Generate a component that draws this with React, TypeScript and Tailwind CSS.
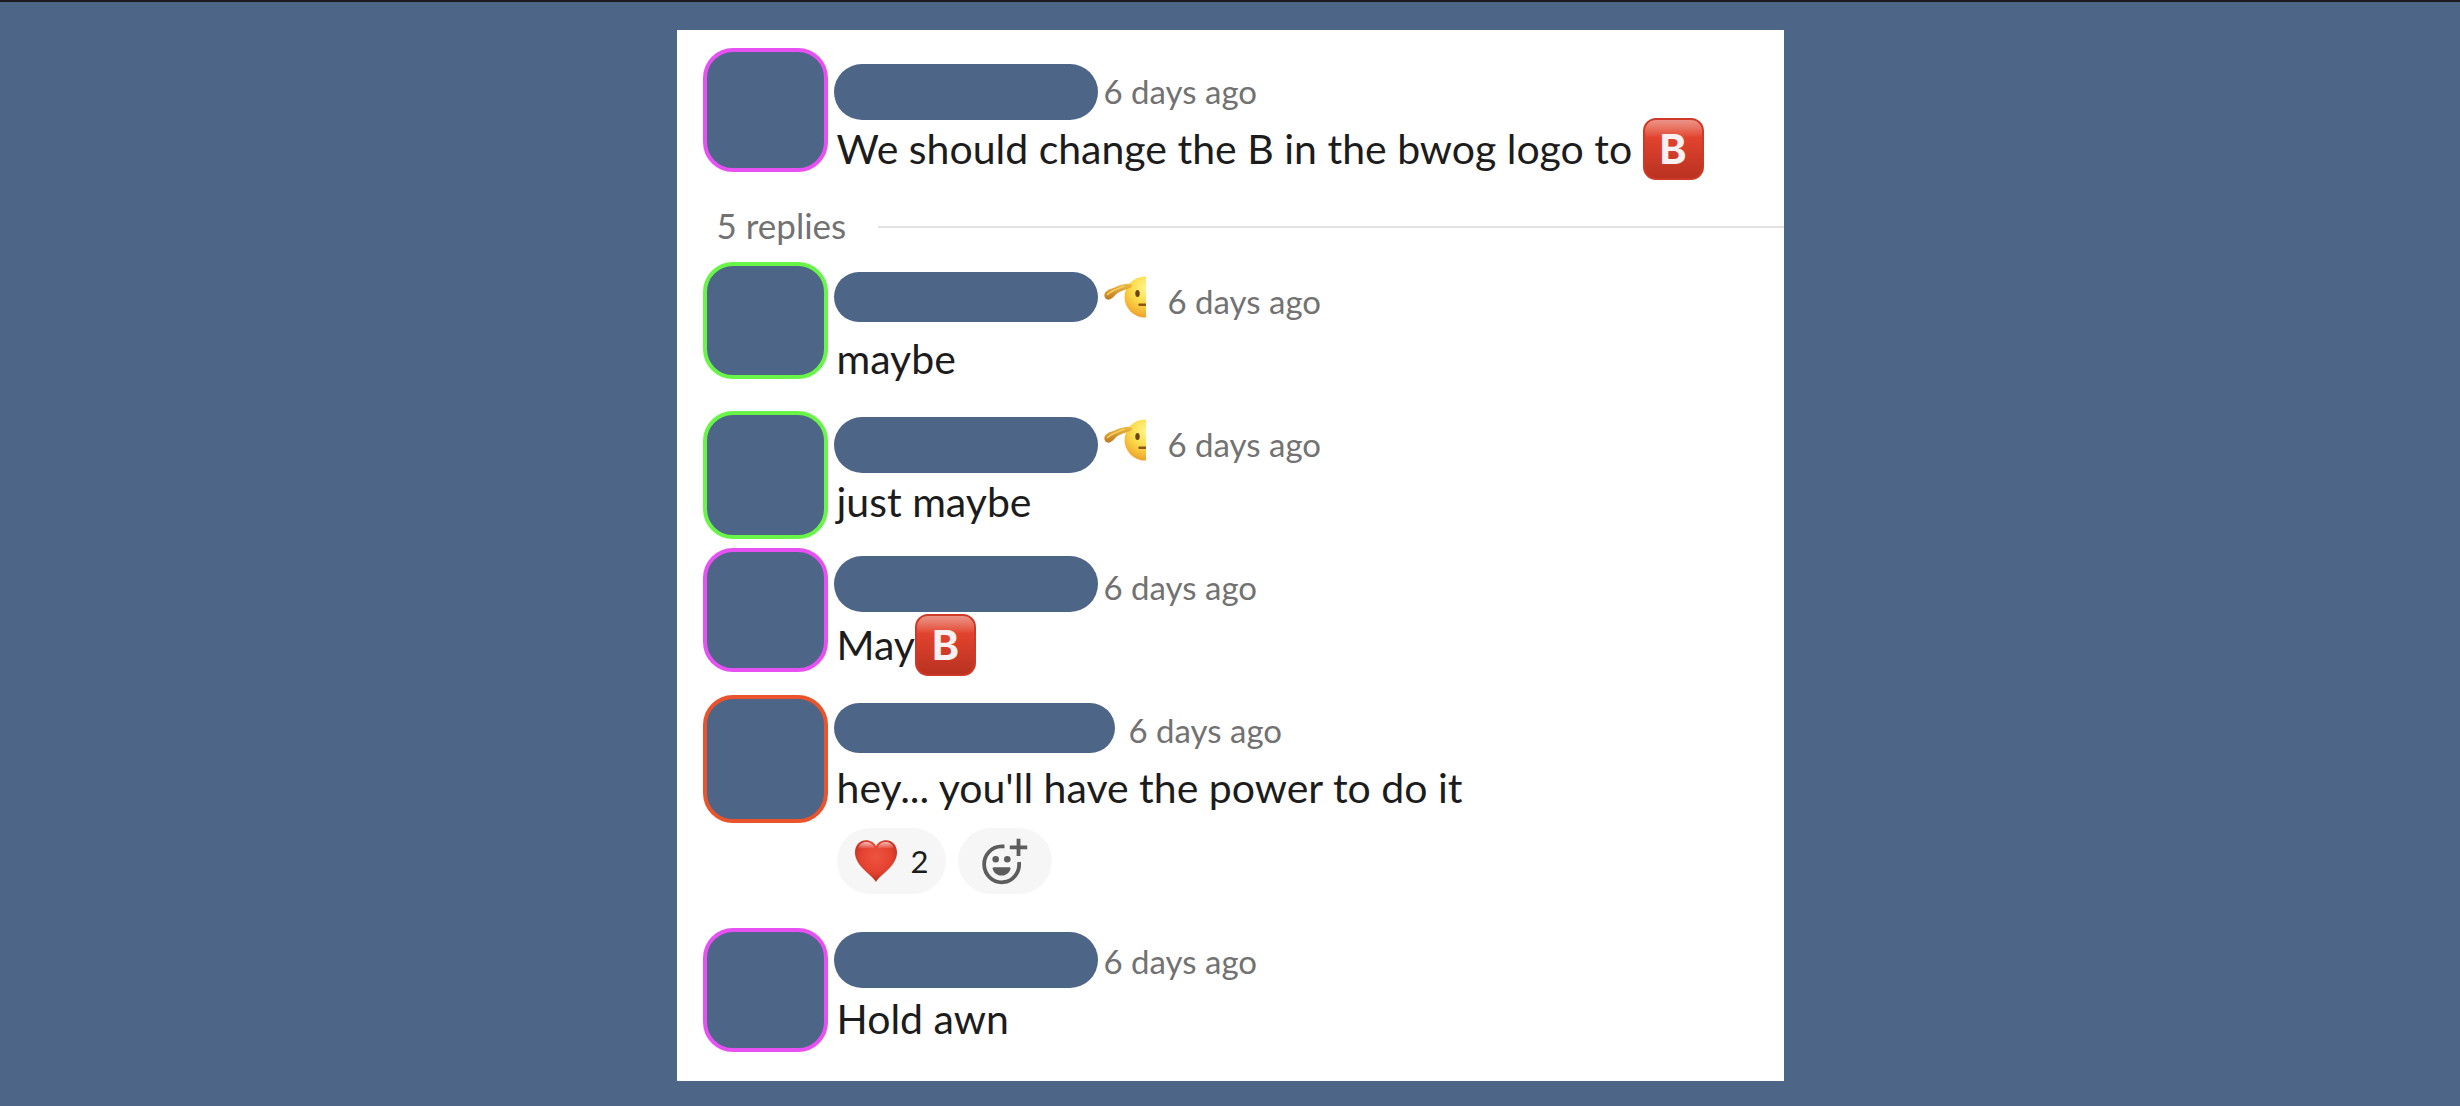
import React from 'react';

interface Message {
  id: number;
  text: string;
  badge?: boolean;
  status?: boolean;
  avatar: string;
  name: string;
  time: string;
  reactions?: number;
}

const original: Message = {
  id: 1,
  text: 'We should change the B in the bwog logo to ',
  badge: true,
  avatar: 'h-31 border-[#e750f3]',
  name: 'mt-4 h-14 w-[264px]',
  time: 'ml-1.5',
};

const replies: Message[] = [
  {
    id: 2,
    text: 'maybe',
    status: true,
    avatar: 'mt-1 h-[117px] border-[#68f548]',
    name: 'mt-3.5 h-[50px] w-[264px]',
    time: 'ml-[22px]',
  },
  {
    id: 3,
    text: 'just maybe',
    status: true,
    avatar: 'mt-2.5 h-32 border-[#68f548]',
    name: 'mt-4 h-14 w-[264px]',
    time: 'ml-[22px]',
  },
  {
    id: 4,
    text: 'May',
    badge: true,
    avatar: 'mt-1 h-31 border-[#e750f3]',
    name: 'mt-3 h-14 w-[264px]',
    time: 'ml-1.5',
  },
  {
    id: 5,
    text: "hey... you'll have the power to do it",
    avatar: 'mt-2 h-32 border-[#e9542c]',
    name: 'mt-4 h-[50px] w-[281px]',
    time: 'ml-3.5',
    reactions: 2,
  },
  {
    id: 6,
    text: 'Hold awn',
    avatar: 'mt-2.5 h-31 border-[#e750f3]',
    name: 'mt-3.5 h-14 w-[264px]',
    time: 'ml-1.5',
  },
];

const SaluteIcon: React.FC = () => (
  <svg viewBox="0 0 42 42" className="w-[42px] h-[42px]" aria-hidden="true">
    <defs>
      <radialGradient id="face" gradientUnits="userSpaceOnUse" cx="42" cy="12" r="32">
        <stop offset="0" stopColor="#fff68a" />
        <stop offset="0.5" stopColor="#fbd848" />
        <stop offset="0.85" stopColor="#f2ab30" />
        <stop offset="1" stopColor="#e2912c" />
      </radialGradient>
      <linearGradient id="hand" x1="0" y1="0" x2="0" y2="1">
        <stop offset="0" stopColor="#efbc44" />
        <stop offset="1" stopColor="#bd781f" />
      </linearGradient>
    </defs>
    <circle cx="41" cy="21" r="20.5" fill="url(#face)" />
    <ellipse cx="33.5" cy="17.5" rx="2.2" ry="3.6" fill="#6d4312" />
    <path d="M35.5 28.7H42" stroke="#8a5518" strokeWidth="2.4" strokeLinecap="round" />
    <path
      d="M1.2 16.5C3.5 13.5 7 12.8 10.5 11.5C15 9.5 18.5 8 23 7.8C26 7.7 28.5 8.5 28 10C27.3 12 24 12.6 21 13.8C17.5 15.2 14 16.2 11.5 18.8C9.5 21.5 6.5 24 3.5 23.6C0.5 23 -0.5 19 1.2 16.5Z"
      fill="url(#hand)"
    />
    <path d="M3.5 18.5C7 14.8 14 13.2 20 10.3" stroke="#f4cd62" strokeWidth="1.6" fill="none" strokeLinecap="round" />
  </svg>
);

const HeartIcon: React.FC = () => (
  <svg viewBox="0 0 42 42" className="w-[42px] h-[42px]" aria-hidden="true">
    <defs>
      <radialGradient id="heart" gradientUnits="userSpaceOnUse" cx="21" cy="17" r="26">
        <stop offset="0" stopColor="#ef5340" />
        <stop offset="0.6" stopColor="#e44230" />
        <stop offset="1" stopColor="#b52a1c" />
      </radialGradient>
      <linearGradient id="shine" x1="0" y1="0" x2="0" y2="1">
        <stop offset="0" stopColor="#fff" stopOpacity="0.65" />
        <stop offset="1" stopColor="#fff" stopOpacity="0" />
      </linearGradient>
    </defs>
    <path
      d="M21 42C18 35.5 0 26.5 0 12.5C0 5 5 0.3 11 0.3C15.5 0.3 19.3 2.6 21 6.2C22.7 2.6 26.5 0.3 31 0.3C37 0.3 42 5 42 12.5C42 26.5 24 35.5 21 42Z"
      fill="url(#heart)"
    />
    <path d="M3 9C4 4 7.5 2 11 2C15 2 18 4 19.5 7.5C16 9.5 7 7 3 9Z" fill="url(#shine)" />
    <path d="M39 9C38 4 34.5 2 31 2C27 2 24 4 22.5 7.5C26 9.5 35 7 39 9Z" fill="url(#shine)" />
  </svg>
);

const AddReactionIcon: React.FC = () => (
  <svg viewBox="0 0 46 47" className="w-[46px] h-[47px]" fill="none" stroke="#5e5d5e" strokeWidth="3.8" aria-hidden="true">
    <path d="M22.5 8.3H19.5A17.5 18 0 1 0 37 24" />
    <path d="M36.5 0.8V18M27.8 9.4H45.2" />
    <g fill="#5e5d5e" stroke="none">
      <circle cx="13.7" cy="21.2" r="3.3" />
      <circle cx="25.3" cy="21.2" r="3.3" />
      <path d="M12 29.2H27.2C28.4 29.2 28.8 30 28.5 31C27.3 35.2 23.8 37.6 19.6 37.6C15.4 37.6 11.9 35.2 10.7 31C10.4 30 10.8 29.2 12 29.2Z" />
    </g>
  </svg>
);

const BBadge: React.FC = () => (
  <span className="shrink-0 w-[61px] h-[62px] rounded-[13px] border-2 border-[#cf3a28] bg-linear-to-b from-[#eb9488] via-[#e2432e] via-30% to-[#b93221] flex items-center justify-center font-['Inter',sans-serif] font-bold text-[41px] leading-none text-[#f7f1f1]">
    B
  </span>
);

const MessageRow: React.FC<{ message: Message }> = ({ message }) => (
  <article className="flex gap-1.5 min-h-[143px] pl-[26px]">
    <div className={`shrink-0 w-[125px] rounded-[30px] border-4 bg-[#4d6587] ${message.avatar}`} />
    <div>
      <header className="flex items-start h-18">
        <div className={`shrink-0 rounded-full bg-[#4d6587] ${message.name}`} />
        {message.status && (
          <span className="ml-1.5 mt-[18px]">
            <SaluteIcon />
          </span>
        )}
        <time className={`mt-[22px] text-[33px] leading-[42px] text-[#727272] whitespace-nowrap ${message.time}`}>6 days ago</time>
      </header>
      <p className="flex items-center h-[58px] pl-[3px] text-[41px] leading-[58px] whitespace-pre">
        {message.text}
        {message.badge && <BBadge />}
      </p>
      {message.reactions && (
        <div className="flex gap-3 mt-[11px] mb-6 pl-[3px]">
          <button type="button" className="flex items-center gap-3.5 h-[66px] px-[18px] rounded-full bg-[#f6f6f6] text-[31px]">
            <HeartIcon />
            {message.reactions}
          </button>
          <button type="button" aria-label="Add reaction" className="flex items-center px-6 h-[66px] rounded-full bg-[#f6f6f6]">
            <AddReactionIcon />
          </button>
        </div>
      )}
    </div>
  </article>
);

const App: React.FC = () => {
  return (
    <div className="min-h-screen bg-[#4d6587] border-t-2 border-[#1b1a1c] pt-7 pb-6 font-['Lato',sans-serif] text-[#1d1c1d]">
      <main className="w-[45%] mx-auto bg-white pt-[18px] pb-5">
        <MessageRow message={original} />
        <div className="flex items-center gap-8 h-[67px] pt-[5px] pl-10">
          <h2 className="pb-1 text-[35px] leading-[42px] text-[#727272]">5 replies</h2>
          <div className="flex-1 h-[2px] bg-[#e2e2e2]" />
        </div>
        {replies.map((message) => (
          <MessageRow key={message.id} message={message} />
        ))}
      </main>
    </div>
  );
};

export default App;
